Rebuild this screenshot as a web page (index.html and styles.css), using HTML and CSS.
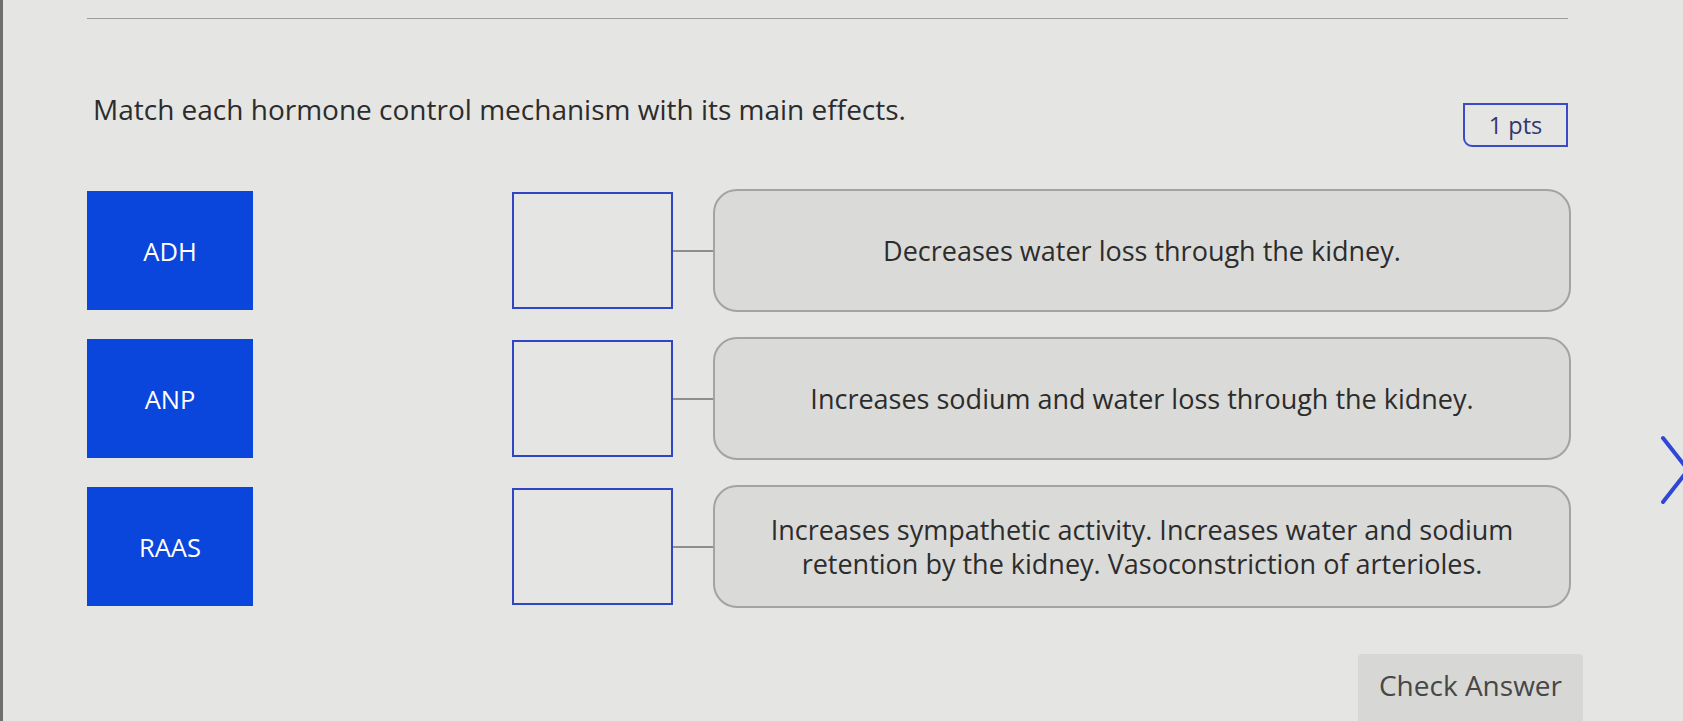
FILE: index.html
```html
<!DOCTYPE html>
<html lang="en">
<head>
<meta charset="utf-8">
<title>Matching question</title>
<link rel="stylesheet" href="styles.css">
</head>
<body>
<div class="page">
  <div class="rule"></div>
  <div class="header">
    <h1 class="prompt">Match each hormone control mechanism with its main effects.</h1>
    <div class="pts">1 pts</div>
  </div>
  <div class="rows">
    <div class="row">
      <div class="term">ADH</div>
      <div class="slot"></div>
      <div class="link"></div>
      <div class="def">Decreases water loss through the kidney.</div>
    </div>
    <div class="row">
      <div class="term">ANP</div>
      <div class="slot"></div>
      <div class="link"></div>
      <div class="def">Increases sodium and water loss through the kidney.</div>
    </div>
    <div class="row">
      <div class="term">RAAS</div>
      <div class="slot"></div>
      <div class="link"></div>
      <div class="def">Increases sympathetic activity. Increases water and sodium<br>retention by the kidney. Vasoconstriction of arterioles.</div>
    </div>
  </div>
  <div class="footer">
    <button class="check">Check Answer</button>
  </div>
  <svg class="chevron" width="40" height="72" viewBox="0 0 40 72"><polyline points="3,4 28,36 3,68" fill="none" stroke="#2f46d6" stroke-width="4" stroke-linecap="round" stroke-linejoin="round"/></svg>
</div>
</body>
</html>
```

FILE: styles.css
```css
html, body {
  margin: 0;
  padding: 0;
  height: 100%;
  overflow: hidden;
}
body {
  background: #e5e5e3;
  font-family: "Open Sans", "Liberation Sans", sans-serif;
  color: #2e2e2e;
}
.page {
  position: relative;
  height: 721px;
  padding: 18px 0 0 84px;
  box-sizing: border-box;
  border-left: 3px solid #6f6f6d;
}
.rule {
  width: 1481px;
  height: 1px;
  background: #9c9c9a;
}
.header {
  display: flex;
  justify-content: space-between;
  align-items: flex-start;
  width: 1481px;
  margin-top: 71px;
}
.prompt {
  margin: 0 0 0 6px;
  font-size: 28px;
  line-height: 38px;
  font-weight: 400;
  color: #2c2c2c;
}
.pts {
  margin-top: 13px;
  width: 105px;
  height: 44px;
  box-sizing: border-box;
  border: 2px solid #3b4bc8;
  border-radius: 0 0 0 9px;
  display: flex;
  align-items: center;
  justify-content: center;
  font-size: 23.5px;
  color: #30386e;
}
.rows {
  margin-top: 42px;
  display: flex;
  flex-direction: column;
  gap: 25px;
}
.row {
  display: flex;
  align-items: center;
  height: 123px;
}
.term {
  width: 166px;
  height: 119px;
  background: #0a45dc;
  color: #ffffff;
  font-size: 25.5px;
  display: flex;
  align-items: center;
  justify-content: center;
  flex-shrink: 0;
}
.slot {
  margin-left: 259px;
  width: 161px;
  height: 117px;
  box-sizing: border-box;
  border: 2px solid #2f45c4;
  flex-shrink: 0;
}
.link {
  width: 40px;
  height: 2px;
  background: #8e8e8c;
  flex-shrink: 0;
}
.def {
  width: 858px;
  height: 123px;
  box-sizing: border-box;
  border: 2px solid #a3a3a1;
  border-radius: 24px;
  background: #dadad8;
  display: flex;
  align-items: center;
  justify-content: center;
  text-align: center;
  font-size: 27px;
  line-height: 34px;
  color: #2c2c2c;
  flex-shrink: 0;
}
.footer {
  display: flex;
  justify-content: flex-end;
  width: 1496px;
  margin-top: 46px;
}
.check {
  width: 225px;
  height: 80px;
  padding: 14px 0 0 0;
  align-self: flex-start;
  display: flex;
  justify-content: center;
  align-items: flex-start;
  border: none;
  border-radius: 4px;
  background: #d7d7d5;
  font-family: "Open Sans", "Liberation Sans", sans-serif;
  font-size: 28px;
  line-height: 34px;
  color: #474747;
}
.chevron {
  position: absolute;
  left: 1657px;
  top: 434px;
}
```
